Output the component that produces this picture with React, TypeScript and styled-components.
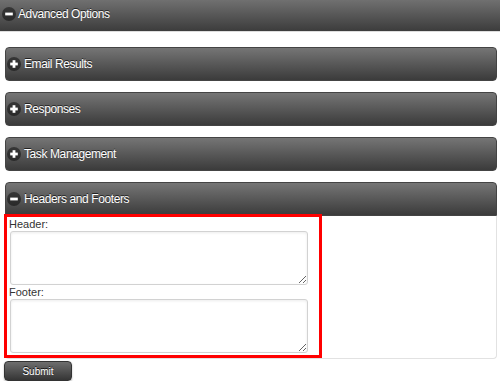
import React from 'react';
import styled, { createGlobalStyle } from 'styled-components';

const GlobalStyle = createGlobalStyle`
  html, body {
    margin: 0;
    padding: 0;
    background: #fff;
    font-family: 'Liberation Sans', Arial, sans-serif;
  }
`;

const Page = styled.div`
  display: flex;
  flex-direction: column;
  width: 500px;
`;

// Top header bar spanning the whole page
const TopBar = styled.div`
  height: 32px;
  display: flex;
  align-items: center;
  gap: 2px;
  padding: 0 0 3px 2px;
  box-sizing: border-box;
  background: linear-gradient(#707070, #3c3c3c);
  border-bottom: 1px solid #ddd;
  color: #fff;
  font-size: 12px;
  letter-spacing: -0.4px;
  text-shadow: 0 -1px 0 #222;
`;

const Sections = styled.div`
  display: flex;
  flex-direction: column;
  padding: 15px 3px 0 5px;
`;

const Section = styled.div`
  display: flex;
  flex-direction: column;
  margin-bottom: 11px;

  &:last-child {
    margin-bottom: 0;
  }
`;

const Bar = styled.div<{ $open?: boolean }>`
  height: 34px;
  display: flex;
  align-items: center;
  gap: 3px;
  padding-left: 1px;
  box-sizing: border-box;
  background: linear-gradient(#757575, #3b3b3b);
  border: 1px solid #444;
  border-radius: ${(p) => (p.$open ? '4px 4px 0 0' : '4px')};
  color: #fff;
  font-size: 12px;
  letter-spacing: -0.4px;
  text-shadow: 0 -1px 0 #222;
`;

const Panel = styled.div`
  height: 143px;
  box-sizing: border-box;
  border: 1px solid #e2e2e2;
  border-top: none;
  border-radius: 0 0 4px 4px;
  background: #fff;
  display: flex;
  flex-direction: column;
`;

// The red annotation frame drawn around the form fields
const Highlight = styled.div`
  width: 318px;
  height: 144px;
  box-sizing: border-box;
  margin: -2px 0 0 -2px;
  border: 3px solid #f00;
  padding: 0 0 1px 2px;
  display: flex;
  flex-direction: column;
`;

const Label = styled.label`
  font-size: 11px;
  line-height: 14px;
  color: #333;
`;

const TextArea = styled.textarea`
  width: 298px;
  height: 54px;
  box-sizing: border-box;
  margin: 0 0 0 1px;
  border: 1px solid #d2d2d2;
  border-radius: 3px;
  box-shadow: inset 0 1px 3px rgba(0, 0, 0, 0.08);
  background: #fff;
  font-family: inherit;
  font-size: 11px;
  outline: none;
`;

const SubmitButton = styled.button`
  margin: 2px 0 0 4px;
  width: 68px;
  height: 20px;
  border: 1px solid #333;
  border-radius: 4px;
  background: linear-gradient(#6e6e6e, #353535);
  color: #fff;
  font-family: inherit;
  font-size: 10px;
  text-shadow: 0 -1px 0 #111;
  box-shadow: 0 1px 2px rgba(0, 0, 0, 0.3);
  padding: 0;
`;

const Icon = ({ open }: { open: boolean }) => (
  <svg width='14' height='14' viewBox='0 0 14 14'>
    <circle cx='7' cy='7' r='7' fill='rgba(0,0,0,0.45)' />
    <rect x='3.2' y='5.6' width='7.6' height='2.8' fill='#fff' />
    {!open && <rect x='5.6' y='3.2' width='2.8' height='7.6' fill='#fff' />}
  </svg>
);

const collapsed = ['Email Results', 'Responses', 'Task Management'];

function App() {
  return (
    <Page>
      <GlobalStyle />
      <TopBar>
        <Icon open />
        Advanced Options
      </TopBar>
      <Sections>
        {collapsed.map((title) => (
          <Section key={title}>
            <Bar>
              <Icon open={false} />
              {title}
            </Bar>
          </Section>
        ))}
        <Section>
          <Bar $open>
            <Icon open />
            Headers and Footers
          </Bar>
          <Panel>
            <Highlight>
              <Label>Header:</Label>
              <TextArea />
              <Label>Footer:</Label>
              <TextArea />
            </Highlight>
          </Panel>
        </Section>
      </Sections>
      <SubmitButton>Submit</SubmitButton>
    </Page>
  );
}

export default App;
